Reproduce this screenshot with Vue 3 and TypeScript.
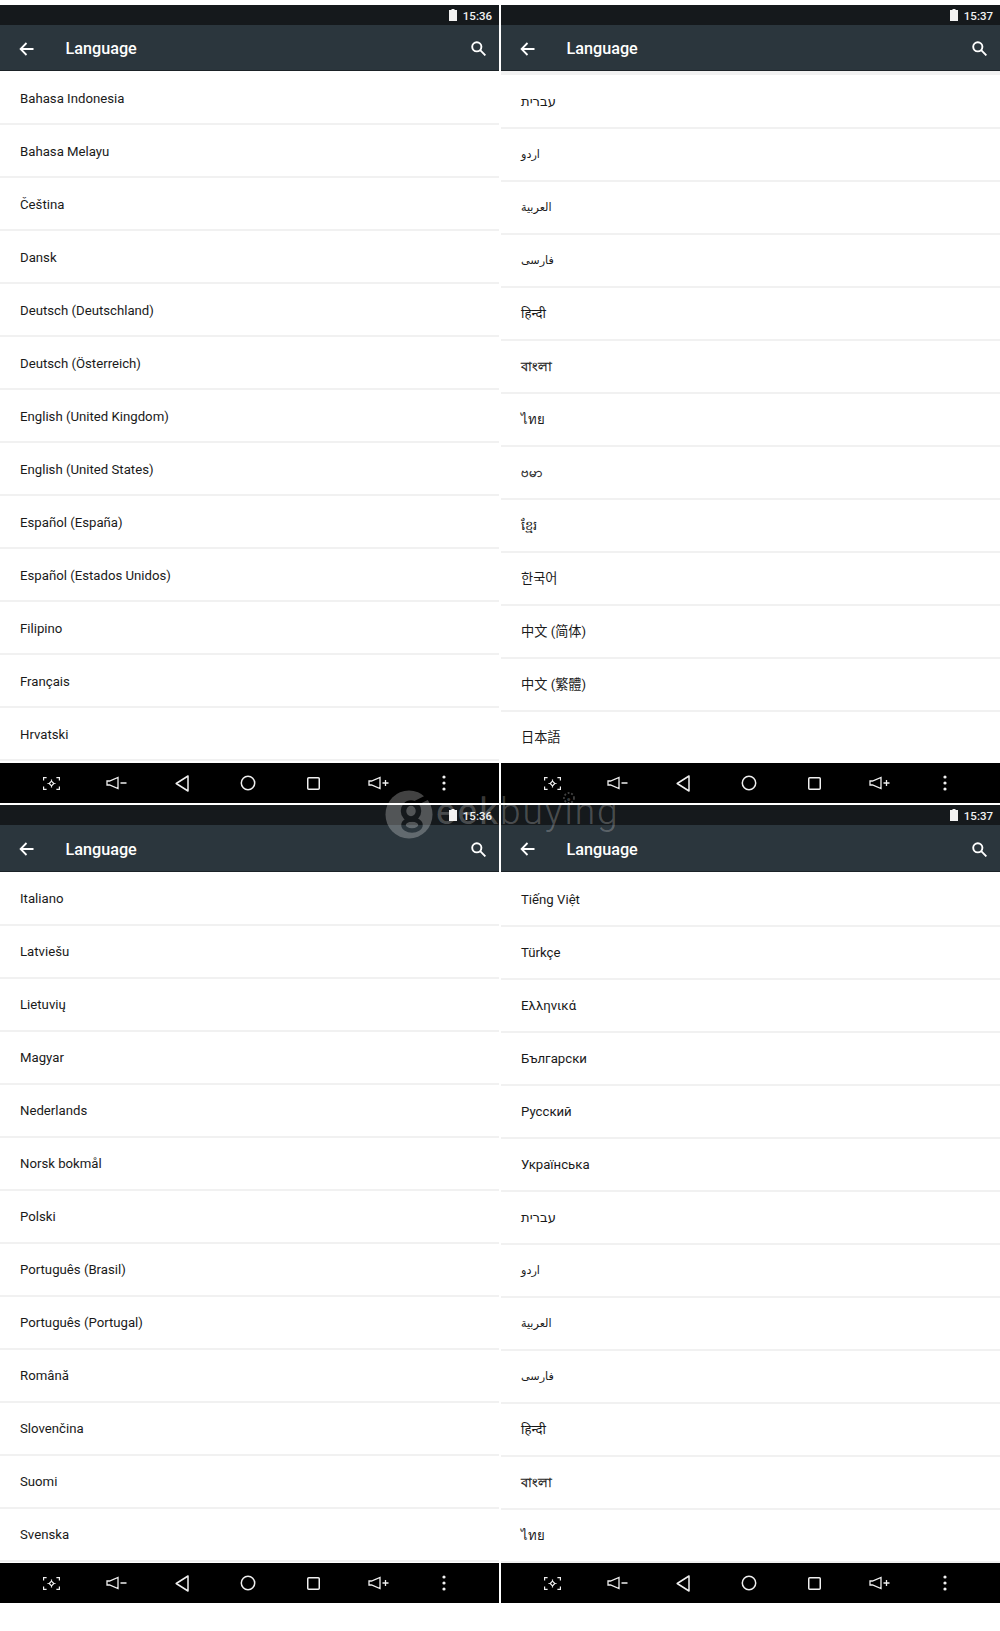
<script setup lang="ts">
interface Panel {
  time: string
  offset: string
  rows: string[]
}

const tail = ['עברית', 'اردو', 'العربية', 'فارسی', 'हिन्दी', 'বাংলা', 'ไทย']

const panels: Panel[] = [
  {
    time: '15:36',
    offset: 'top-left',
    rows: ['Bahasa Indonesia', 'Bahasa Melayu', 'Čeština', 'Dansk', 'Deutsch (Deutschland)', 'Deutsch (Österreich)', 'English (United Kingdom)', 'English (United States)', 'Español (España)', 'Español (Estados Unidos)', 'Filipino', 'Français', 'Hrvatski'],
  },
  {
    time: '15:37',
    offset: 'top-right',
    rows: [...tail, 'ဗမာ', 'ខ្មែរ', '한국어', '中文 (简体)', '中文 (繁體)', '日本語'],
  },
  {
    time: '15:36',
    offset: 'bottom-left',
    rows: ['Italiano', 'Latviešu', 'Lietuvių', 'Magyar', 'Nederlands', 'Norsk bokmål', 'Polski', 'Português (Brasil)', 'Português (Portugal)', 'Română', 'Slovenčina', 'Suomi', 'Svenska'],
  },
  {
    time: '15:37',
    offset: 'bottom-right',
    rows: ['Tiếng Việt', 'Türkçe', 'Ελληνικά', 'Български', 'Русский', 'Українська', ...tail],
  },
]

function rowClass(text: string): string {
  if (/[\u0600-\u06ff]/.test(text)) return 'arabic'
  if (/[\u0980-\u09ff\u1000-\u109f]/.test(text)) return 'thin'
  return ''
}
</script>

<template>
  <div class="page">
    <section v-for="(p, i) in panels" :key="i" class="panel">
      <div class="status">
        <svg class="battery" width="8" height="12" viewBox="0 0 8 12"><path d="M2.500 0h3v1H8v11H0V1h2.500z" fill="#f2f2f2" /></svg>
        <span class="time">{{ p.time }}</span>
      </div>
      <header class="appbar">
        <svg class="back" width="15" height="14" viewBox="0 0 15 14" fill="none" stroke="#fff" stroke-width="1.800"><path d="M14.500 7H2M7.500 1 1.600 7l5.900 6" /></svg>
        <h1 class="title">Language</h1>
        <svg class="search" width="15" height="15" viewBox="0 0 15 15" fill="none" stroke="#fff" stroke-width="1.900"><circle cx="5.800" cy="5.800" r="4.600" /><path d="m9.200 9.200 5.200 5.200" /></svg>
      </header>
      <ul class="list" :class="p.offset">
        <li v-for="r in p.rows" :key="r" class="row"><span :class="rowClass(r)">{{ r }}</span></li>
      </ul>
      <nav class="nav">
        <svg width="17" height="13" viewBox="0 0 17 13" fill="none" stroke="#f0f0f0" stroke-width="1.200"><path d="M.6 3.500V.6h3M13.400.6h3v2.900M.6 9.500v2.900h3M13.400 12.400h3V9.500" /><path d="M8.500 4.200 10.800 6.500 8.500 8.800 6.200 6.500zM8.500 2.400v1M8.500 9.600v1M4.500 6.500h1M11.500 6.500h1" /></svg>
        <svg width="21" height="14" viewBox="0 0 21 14" fill="none" stroke="#f0f0f0" stroke-width="1.300"><path d="M1 5h2.500L12 1.500v11L3.500 9H1zM14.500 7h6" /></svg>
        <svg width="14" height="17" viewBox="0 0 14 17" fill="none" stroke="#f0f0f0" stroke-width="1.500"><path d="M13 1v15L1.200 8.500z" stroke-linejoin="round" /></svg>
        <svg width="16" height="16" viewBox="0 0 16 16" fill="none" stroke="#f0f0f0" stroke-width="1.500"><circle cx="8" cy="8" r="6.700" /></svg>
        <svg width="13" height="13" viewBox="0 0 13 13" fill="none" stroke="#f0f0f0" stroke-width="1.500"><rect x=".75" y=".75" width="11.500" height="11.500" rx="1" /></svg>
        <svg width="21" height="14" viewBox="0 0 21 14" fill="none" stroke="#f0f0f0" stroke-width="1.300"><path d="M1 5h2.500L12 1.500v11L3.500 9H1zM14.500 7h6M17.500 4v6" /></svg>
        <svg width="4" height="16" viewBox="0 0 4 16" fill="#f0f0f0"><circle cx="2" cy="2" r="1.600" /><circle cx="2" cy="8" r="1.600" /><circle cx="2" cy="14" r="1.600" /></svg>
      </nav>
    </section>
    <div class="mark">
      <svg class="mark-logo" width="48" height="50" viewBox="0 0 48 50">
        <mask id="logo-cut">
          <rect width="48" height="50" fill="#fff" />
          <g fill="none" stroke="#000">
            <ellipse cx="26" cy="21" rx="7.500" ry="8" stroke-width="5.500" />
            <ellipse cx="27" cy="35" rx="8.500" ry="5.500" stroke-width="4.500" />
            <path d="M31 13 45 6" stroke-width="5" />
          </g>
        </mask>
        <ellipse cx="24" cy="24.500" rx="23.500" ry="24" fill="#fff" mask="url(#logo-cut)" />
      </svg>
      <span class="mark-text">eek<span class="mark-light">buying</span></span>
      <svg class="mark-ring" width="12" height="12" viewBox="0 0 12 12" fill="none" stroke="#fff" stroke-width="1.800" stroke-dasharray="1.800 1.800"><circle cx="6" cy="6" r="5" /></svg>
    </div>
  </div>
</template>

<style>
html, body { margin: 0; background: #fff; }
</style>

<style scoped>
.page {
  position: relative;
  width: 1000px;
  height: 1631px;
  box-sizing: border-box;
  padding-top: 5px;
  overflow: hidden;
  display: grid;
  grid-template-columns: 499px 499px;
  grid-template-rows: 798px 798px;
  column-gap: 2px;
  row-gap: 2px;
  align-content: start;
  background: #fff;
  font-family: Roboto, "Noto Sans", "DejaVu Sans", "Noto Sans CJK SC", sans-serif;
}
.panel {
  display: flex;
  flex-direction: column;
  min-height: 0;
  overflow: hidden;
}
.status {
  height: 19px;
  padding-top: 1px;
  flex: none;
  background: #15191c;
  display: flex;
  align-items: center;
  justify-content: flex-end;
  padding-right: 7px;
  gap: 6px;
}
.battery { margin-top: -1px; }
.time { color: #f2f2f2; font-size: 11.500px; font-weight: 500; }
.appbar {
  height: 43px;
  flex: none;
  background: #2b363d;
  border-bottom: 1px solid #1b2227;
  display: flex;
  align-items: center;
  padding: 2px 13px 0 19px;
}
.panel:nth-child(n + 3) .appbar { height: 44px; }
.title {
  margin: 0 0 0 31.500px;
  color: #fff;
  font-size: 16.200px;
  font-weight: 500;
  flex: 1;
}
.list {
  list-style: none;
  margin: 0;
  padding: 0;
  flex: 1;
  min-height: 0;
  overflow: hidden;
}
.top-left { padding-top: 1px; }
.top-left .row { height: 49px; padding-top: 2px; }
.top-right {
  padding-top: 5px;
  background: linear-gradient(#f1f1f1 0 4px, transparent 4px) no-repeat;
}
.bottom-left { padding-top: 1px; }
.bottom-right { padding-top: 2px; }
.row {
  height: 51px;
  border-bottom: 2px solid #f1f1f1;
  display: flex;
  align-items: center;
  padding-left: 20px;
  color: #1a1a1a;
  font-size: 13.200px;
  line-height: 16px;
}
.arabic { font-size: 11.200px; }
.thin { -webkit-text-stroke: 0.3px #1a1a1a; }
.nav {
  height: 40px;
  flex: none;
  background: #000;
  display: grid;
  grid-template-columns: repeat(7, 65.500px);
  justify-items: center;
  align-items: center;
  padding-left: 18.250px;
}
.mark {
  position: absolute;
  left: 385px;
  top: 790px;
  display: flex;
  align-items: flex-start;
  color: rgba(255, 255, 255, 0.24);
  pointer-events: none;
}
.mark-logo { opacity: 0.26; flex: none; }
.mark-text {
  margin-left: 3px;
  font-size: 37px;
  line-height: 44px;
  letter-spacing: 2px;
  white-space: nowrap;
}
.mark-light { font-weight: 300; }
.mark-ring {
  position: absolute;
  left: 178px;
  top: 2px;
  opacity: 0.25;
}
</style>
